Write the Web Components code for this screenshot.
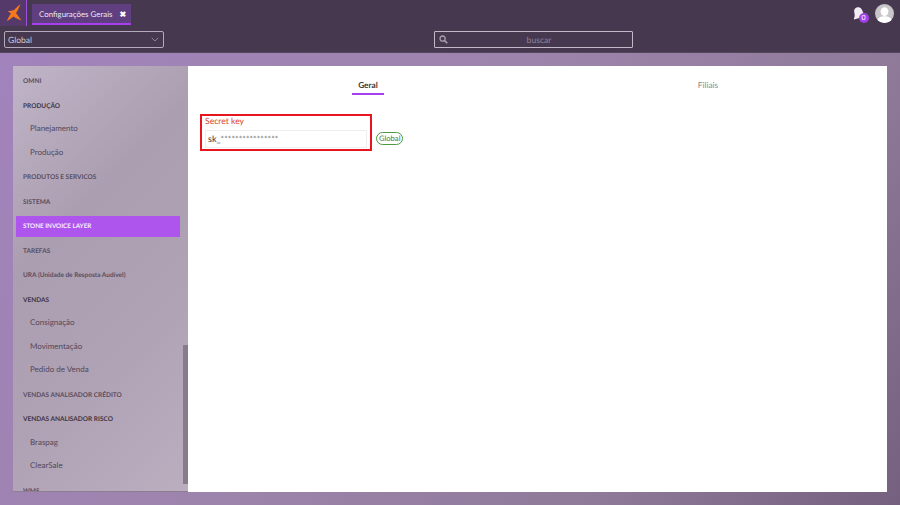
<!DOCTYPE html>
<html lang="pt-BR">
<head>
<meta charset="utf-8">
<title>Configurações Gerais</title>
<style>
  html, body { margin: 0; height: 100%; }
  body {
    width: 900px; height: 505px; overflow: hidden;
    font-family: Lato, "Open Sans", sans-serif;
    text-rendering: geometricPrecision;
    background: linear-gradient(125deg, #a283bd 0%, #9d84ac 45%, #8f7a99 75%, #75607f 100%);
    display: flex; flex-direction: column;
  }
</style>
</head>
<body>
<app-top-bar></app-top-bar>
<app-workspace>
  <side-menu slot="menu">
    <menu-item kind="head">OMNI</menu-item>
    <menu-item kind="head" strong>PRODUÇÃO</menu-item>
    <menu-item kind="child">Planejamento</menu-item>
    <menu-item kind="child">Produção</menu-item>
    <menu-item kind="head">PRODUTOS E SERVICOS</menu-item>
    <menu-item kind="head">SISTEMA</menu-item>
    <menu-item kind="head" active>STONE INVOICE LAYER</menu-item>
    <menu-item kind="head">TAREFAS</menu-item>
    <menu-item kind="head">URA (Unidade de Resposta Audível)</menu-item>
    <menu-item kind="head" strong>VENDAS</menu-item>
    <menu-item kind="child">Consignação</menu-item>
    <menu-item kind="child">Movimentação</menu-item>
    <menu-item kind="child">Pedido de Venda</menu-item>
    <menu-item kind="head">VENDAS ANALISADOR CRÉDITO</menu-item>
    <menu-item kind="head" strong>VENDAS ANALISADOR RISCO</menu-item>
    <menu-item kind="child">Braspag</menu-item>
    <menu-item kind="child">ClearSale</menu-item>
    <menu-item kind="head">WMS</menu-item>
  </side-menu>
  <settings-panel></settings-panel>
</app-workspace>

<script>
class AppTopBar extends HTMLElement {
  constructor() {
    super();
    this.shadowDOM = this.attachShadow({ mode: 'open' });
  }

  connectedCallback() {
    this.shadowDOM.innerHTML = `
      <style>
        :host {
          display: block; flex: none; height: 53px; box-sizing: border-box;
          background: #46384e; border-bottom: 1px solid #54465c; color: #fff;
        }
        .row1 { display: flex; align-items: flex-start; height: 26px; }
        .logo { width: 26px; height: 26px; background: #54396a; border-right: 1px solid #a04fe0; flex: none; }
        .logo svg { display: block; }
        .tab {
          margin: 4px 0 0 5px; width: 99px; height: 21px; box-sizing: border-box;
          background: #5f3f80; border-bottom: 2px solid #a83fef;
          display: flex; align-items: center; padding-left: 7px; gap: 7px;
          font-size: 7.9px; color: #ece6f0; white-space: nowrap;
        }
        .x { font-size: 8px; font-weight: 700; color: #fff; line-height: 1; }
        .right { margin-left: auto; display: flex; align-items: center; gap: 8px; padding: 4px 6px 0 0; }
        .bell { position: relative; width: 15px; height: 18px; }
        .bell svg { display: block; margin-top: 1px; transform: rotate(-16deg); }
        .badge {
          position: absolute; left: 6.5px; top: 8px; width: 10px; height: 10px; border-radius: 50%;
          background: #a33fee; color: #fff; font-size: 7px; line-height: 10px; text-align: center;
        }
        .row2 { display: flex; align-items: center; height: 17px; margin-top: 5px; padding-left: 4px; }
        .select {
          width: 160px; height: 17px; box-sizing: border-box; border: 1px solid #b5aabb; border-radius: 2px;
          display: flex; align-items: center; justify-content: space-between; padding: 0 4px 0 3px;
          font-size: 8.5px; color: #cfc8d4;
        }
        .search {
          margin-left: 270px; width: 199px; height: 17px; box-sizing: border-box; border: 1px solid #c2b8c8; border-radius: 1px;
          display: flex; align-items: center; padding: 0 4px; font-size: 8.6px; color: #8f8397;
        }
        .search span { flex: 1; text-align: center; padding-left: 2px; }
      </style>
      <div class="row1">
        <div class="logo">
          <svg width="26" height="26" viewBox="0 0 26 26">
            <path fill="#f5791c" d="M20.5 4 C19 8 17.5 11 16 13 L21.5 20.5 C18 19.2 15.2 17.8 13.5 16.5 C11.5 18 9.5 19.7 7 21 C8 18 9.5 15.5 11 13.5 L7.5 11 C10 11 12 10.8 14 10 C16 8 18 6 20.5 4 Z"/>
          </svg>
        </div>
        <div class="tab">Configurações Gerais <span class="x">✖</span></div>
        <div class="right">
          <div class="bell">
            <svg width="14" height="16" viewBox="0 0 13 15">
              <path fill="#f1edf5" d="M6.5 1 C9.2 1 10.3 3.2 10.4 5.5 C10.5 8 11.3 9.3 12.3 10.3 L12.3 11.2 L0.7 11.2 L0.7 10.3 C1.7 9.3 2.5 8 2.6 5.5 C2.7 3.2 3.8 1 6.5 1 Z"/>
            </svg>
            <div class="badge">0</div>
          </div>
          <svg width="19" height="19" viewBox="0 0 19 19">
            <defs><clipPath id="av"><circle cx="9.5" cy="9.5" r="9.5"/></clipPath></defs>
            <circle cx="9.5" cy="9.5" r="9.5" fill="#c9c6c9"/>
            <g clip-path="url(#av)" fill="#fff">
              <ellipse cx="9.5" cy="7.6" rx="3.9" ry="4.4"/>
              <ellipse cx="9.5" cy="17" rx="7.2" ry="4.8"/>
            </g>
          </svg>
        </div>
      </div>
      <div class="row2">
        <div class="select">Global
          <svg width="8" height="5" viewBox="0 0 8 5"><path d="M.7.8 4 4 7.3.8" fill="none" stroke="#8f8397" stroke-width="1"/></svg>
        </div>
        <div class="search">
          <svg width="9" height="9" viewBox="0 0 9 9"><circle cx="3.6" cy="3.6" r="2.6" fill="none" stroke="#a99fb0" stroke-width="1.3"/><path d="M5.6 5.6 8.3 8.3" stroke="#a99fb0" stroke-width="1.6"/></svg>
          <span>buscar</span>
        </div>
      </div>`;
  }
}

class AppWorkspace extends HTMLElement {
  constructor() {
    super();
    this.shadowDOM = this.attachShadow({ mode: 'open' });
  }

  connectedCallback() {
    this.shadowDOM.innerHTML = `
      <style>
        :host { display: flex; flex: 1; min-height: 0; padding: 13px 13px 13px; }
      </style>
      <slot name="menu"></slot>
      <slot></slot>`;
  }
}

class SideMenu extends HTMLElement {
  constructor() {
    super();
    this.shadowDOM = this.attachShadow({ mode: 'open' });
  }

  connectedCallback() {
    this.shadowDOM.innerHTML = `
      <style>
        :host {
          display: block; position: relative; flex: none; width: 175px; overflow: hidden;
          background: linear-gradient(135deg, #c0b4c8 0%, #ab9eb0 35%, #afa2b5 65%, #baaebf 100%);
          border-bottom: 1px solid #8c7d93;
          box-sizing: border-box; padding: 3px 8px 0 3px;
        }
        .thumb { position: absolute; right: 0; top: 279px; width: 5px; height: 139px; background: #867c8b; }
      </style>
      <slot></slot>
      <div class="thumb"></div>`;
  }
}

class MenuItem extends HTMLElement {
  constructor() {
    super();
    this.shadowDOM = this.attachShadow({ mode: 'open' });
  }

  connectedCallback() {
    this.shadowDOM.innerHTML = `
      <style>
        :host {
          display: flex; align-items: center; box-sizing: border-box; height: 24.5px;
          padding: 1px 0 0 7px; font-size: 6.5px; font-weight: 700; color: #5a4e60; white-space: nowrap;
        }
        :host([strong]) { color: #3f3545; }
        :host([kind="child"]) { height: 23.5px; padding: 0 0 3px 14px; font-size: 8px; font-weight: 400; color: #54485a; }
        :host([active]) { height: 21px; margin: 1.75px 0; background: #ae55ee; color: #f6eefc; font-size: 6.3px; }
      </style>
      <slot></slot>`;
  }
}

class SettingsPanel extends HTMLElement {
  constructor() {
    super();
    this.shadowDOM = this.attachShadow({ mode: 'open' });
  }

  connectedCallback() {
    this.shadowDOM.innerHTML = `
      <style>
        :host { display: block; flex: 1; background: #fff; color: #333; }
        .tabs { display: grid; grid-template-columns: 360px 320px; height: 27px; padding-top: 14px; box-sizing: content-box; font-size: 8.3px; }
        .tab { display: flex; flex-direction: column; align-items: center; }
        .tab.on { color: #3a3a3a; font-weight: 700; }
        .tab.on span { width: 32px; height: 2px; background: #a83fef; margin-top: 3px; }
        .tab.off { color: #8a8a8a; }
        .row { display: flex; align-items: flex-end; gap: 4px; margin: 7px 0 0 12px; }
        .field { width: 172px; height: 37px; box-sizing: border-box; border: 2px solid #e8141e; padding: 0 3px; }
        label { display: block; font-size: 8.6px; line-height: 10px; color: #d8452e; }
        .input { margin-top: 4px; height: 18px; border: 1px solid #eee; box-sizing: border-box; padding-left: 2px; font-size: 9px; line-height: 16px; color: #333; white-space: nowrap; }
        .input span { font-size: 8.5px; color: #777; }
        .pill { border: 1px solid #4c9a40; border-radius: 7px; height: 11px; line-height: 11px; padding: 0 2px; margin-bottom: 6px; font-size: 7.6px; color: #3f7d35; }
      </style>
      <div class="tabs">
        <div class="tab on">Geral<span></span></div>
        <div class="tab off">Filiais</div>
      </div>
      <div class="row">
        <div class="field">
          <label>Secret key</label>
          <div class="input">sk_<span>****************</span></div>
        </div>
        <div class="pill">Global</div>
      </div>`;
  }
}

customElements.define('app-top-bar', AppTopBar);
customElements.define('app-workspace', AppWorkspace);
customElements.define('side-menu', SideMenu);
customElements.define('menu-item', MenuItem);
customElements.define('settings-panel', SettingsPanel);
</script>
</body>
</html>
